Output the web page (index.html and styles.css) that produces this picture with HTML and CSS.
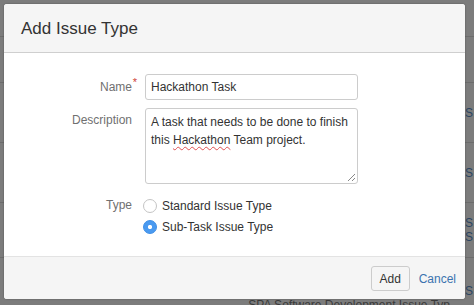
FILE: index.html
```html
<!DOCTYPE html>
<html>
<head>
<meta charset="utf-8">
<link rel="stylesheet" href="styles.css">
</head>
<body>
<div class="page">
  <div class="backdrop">
    <div class="bg-row r-top"></div>
    <div class="bg-row r-a"></div>
    <div class="bg-row r-b"><span class="bg-link">S</span></div>
    <div class="bg-row r-b"><span class="bg-link">S</span></div>
    <div class="bg-row r-c"><span class="bg-link">S<br>S</span></div>
    <div class="bg-row r-d"><span class="bg-desc">SPA Software Development Issue Typ</span><span class="bg-link">S</span></div>
  </div>

  <div class="dialog">
    <div class="dialog-header">
      <h2 class="dialog-title">Add Issue Type</h2>
    </div>
    <div class="dialog-body">
      <form class="form">
        <label class="label">Name<span class="req">*</span></label>
        <div class="field"><input class="text" type="text" value="Hackathon Task"></div>

        <label class="label label-desc">Description</label>
        <div class="field"><div class="textarea">A task that needs to be done to finish this <span class="typo">Hackathon</span> Team project.<span class="grip"></span></div></div>

        <label class="label label-type">Type</label>
        <div class="field radios">
          <div class="radio-row"><span class="radio"></span><span class="radio-text">Standard Issue Type</span></div>
          <div class="radio-row"><span class="radio checked"></span><span class="radio-text">Sub-Task Issue Type</span></div>
        </div>
      </form>
    </div>
    <div class="dialog-footer">
      <button class="btn" type="button">Add</button>
      <a class="cancel">Cancel</a>
    </div>
  </div>
</div>
</body>
</html>
```

FILE: styles.css
```css
* { box-sizing: border-box; }
html, body { margin: 0; padding: 0; }
body {
  width: 474px;
  height: 305px;
  overflow: hidden;
  font-family: "Liberation Sans", Arial, sans-serif;
  background: #7c7c7c;
}
.page {
  position: relative;
  width: 474px;
  height: 305px;
}
.backdrop {
  display: flex;
  flex-direction: column;
  height: 305px;
}
.bg-row {
  position: relative;
  border-bottom: 1px solid #6c6c6c;
  display: flex;
  align-items: center;
  justify-content: flex-end;
}
.r-top { height: 37px; }
.r-a { height: 46px; }
.r-b { height: 60px; }
.r-c { height: 55px; }
.r-d { flex: 1; border-bottom: none; align-items: flex-end; }
.bg-link {
  width: 9px;
  white-space: nowrap;
  font-size: 12px;
  line-height: 14px;
  color: #2b4562;
}
.r-d .bg-link { margin-bottom: 7px; }
.bg-desc {
  font-size: 12px;
  color: #3a3a3a;
  margin-right: 15px;
  margin-bottom: -7px;
  white-space: nowrap;
}

.dialog {
  position: absolute;
  left: 4px;
  top: 4px;
  width: 461px;
  height: 295px;
  background: #fff;
  border-radius: 3px;
  box-shadow: 0 0 2px rgba(0,0,0,0.35);
  display: flex;
  flex-direction: column;
  overflow: hidden;
}
.dialog-header {
  height: 49px;
  background: #f5f5f5;
  border-bottom: 1px solid #cfcfcf;
  display: flex;
  align-items: center;
  padding-left: 17px;
}
.dialog-title {
  margin: 0;
  font-size: 17px;
  font-weight: normal;
  color: #333;
  line-height: 22px;
  padding-top: 2px;
}
.dialog-body {
  flex: 1;
  padding-top: 21px;
}
.form {
  display: grid;
  grid-template-columns: 128px 213px;
  column-gap: 13px;
  row-gap: 8px;
  margin: 0;
}
.label {
  position: relative;
  text-align: right;
  font-size: 12px;
  color: #707070;
  line-height: 26px;
}
.label-desc { line-height: 24px; }
.label-type { margin-top: 3px; line-height: 21px; }
.req {
  position: absolute;
  right: -5px;
  top: -5px;
  color: #d04437;
  font-size: 11px;
}
.text {
  display: block;
  width: 213px;
  height: 26px;
  border: 1px solid #ccc;
  border-radius: 3px;
  padding: 0 5px;
  font-family: "Liberation Sans", Arial, sans-serif;
  font-size: 12px;
  color: #333;
  background: #fff;
  outline: none;
}
.textarea {
  position: relative;
  width: 213px;
  height: 76px;
  border: 1px solid #ccc;
  border-radius: 3px;
  padding: 4px 5px;
  font-size: 12px;
  line-height: 18px;
  color: #333;
}
.typo {
  text-decoration: underline wavy #e05050;
  text-decoration-thickness: 1px;
  text-underline-offset: 2px;
}
.grip {
  position: absolute;
  right: 2px;
  bottom: 2px;
  width: 7px;
  height: 7px;
  background: linear-gradient(135deg, transparent 45%, #888 45%, #888 55%, transparent 55%, transparent 75%, #888 75%, #888 85%, transparent 85%);
}
.radios {
  display: flex;
  flex-direction: column;
  margin-top: 3px;
  margin-left: -2px;
}
.radio-row {
  display: flex;
  align-items: center;
  height: 21px;
}
.radio {
  width: 14px;
  height: 14px;
  border-radius: 50%;
  border: 1px solid #c4c4c4;
  background: #fff;
  margin-right: 5px;
  flex: none;
}
.radio.checked {
  border-color: #3b8de6;
  background: radial-gradient(circle, #fff 0 1.8px, #4a9af0 2.4px);
}
.radio-text {
  font-size: 12px;
  color: #333;
}
.dialog-footer {
  height: 43px;
  background: #f5f5f5;
  border-top: 1px solid #e3e3e3;
  display: flex;
  align-items: center;
  justify-content: flex-end;
  padding-right: 9px;
  padding-top: 1px;
}
.btn {
  height: 25px;
  width: 39px;
  padding: 0;
  border: 1px solid #ccc;
  border-radius: 3px;
  background: #f5f5f5;
  font-family: "Liberation Sans", Arial, sans-serif;
  font-size: 12px;
  color: #333;
  margin-right: 9px;
}
.cancel {
  font-size: 12px;
  color: #3b73af;
}
```
